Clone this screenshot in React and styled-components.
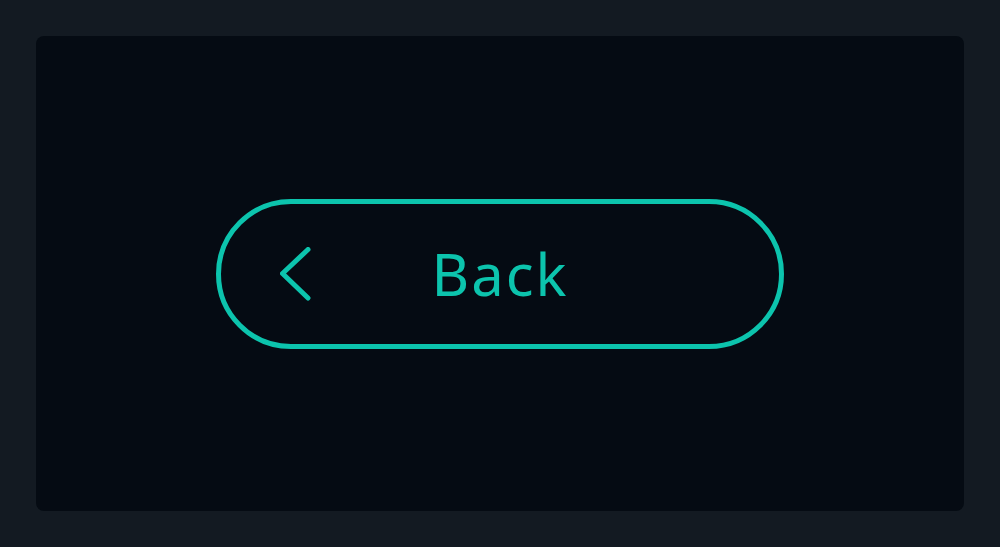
import React from 'react'
import styled, { createGlobalStyle } from 'styled-components'

const GlobalStyle = createGlobalStyle`
    html, body {
        margin: 0;
        padding: 0;
        background-color: #131a22;
    }
`

const Page = styled.div`
    width: 100%;
    height: 547px;
    box-sizing: border-box;
    padding: 36px;
    background-color: #131a22;
`

const Panel = styled.div`
    width: 100%;
    height: 100%;
    border-radius: 8px;
    background-color: #050b13;
    display: flex;
    justify-content: center;
    align-items: center;
`

const BackButton = styled.button`
    width: 568px;
    height: 150px;
    box-sizing: border-box;
    padding: 0 0 0 59px;
    border: 5px solid #0cc4ad;
    border-radius: 75px;
    background: transparent;
    display: grid;
    grid-template-columns: 1fr auto 1fr;
    align-items: center;
    cursor: pointer;
`

const Chevron = styled.svg`
    justify-self: start;
`

const Label = styled.span`
    color: #0cc4ad;
    font-family: "Noto Sans", "Open Sans", sans-serif;
    font-size: 58px;
    font-weight: 400;
    letter-spacing: 2px;
    margin-left: -59px;
    line-height: 1;
`

const App = () => {
  return (
    <>
      <GlobalStyle />
      <Page>
        <Panel>
          <BackButton>
            <Chevron width="32" height="54" viewBox="0 0 32 54">
              <path d="M28 2.5 L2.5 26.5 L28 51" fill="none" stroke="#0cc4ad" strokeWidth="5" strokeLinecap="round" strokeLinejoin="round" />
            </Chevron>
            <Label>Back</Label>
            <span />
          </BackButton>
        </Panel>
      </Page>
    </>
  )
}

export default App
